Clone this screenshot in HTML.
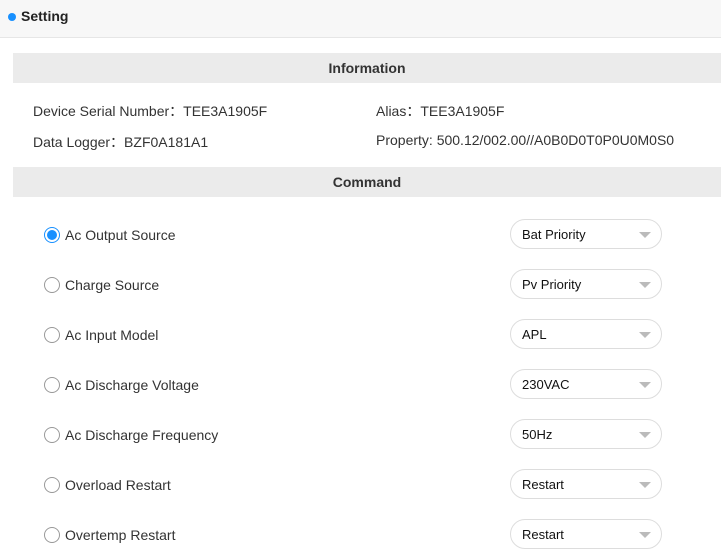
<!DOCTYPE html>
<html><head><style>
body{margin:0;width:721px;height:560px;overflow:hidden;background:#fff;font-family:"Liberation Sans",Arial,sans-serif;color:#333;font-size:14px;position:relative}
.hd{position:absolute;left:0;top:0;width:721px;height:37px;background:#f7f7f7;border-bottom:1px solid #e6e6e6}
.dot{position:absolute;left:8px;top:13px;width:8px;height:8px;border-radius:50%;background:#1890ff}
.hd b{position:absolute;left:21px;top:8px;font-size:14px;color:#222}
.bar{position:absolute;left:13px;width:708px;height:30px;background:#ebebeb;text-align:center;line-height:30px;font-weight:bold;color:#333;font-size:14px}
.t{position:absolute;white-space:nowrap}
.r{position:absolute;left:44px;width:14px;height:14px;border:1px solid #999;border-radius:50%;background:#fff}
.r.on{border-color:#1890ff}
.r.on:after{content:"";position:absolute;left:2px;top:2px;width:10px;height:10px;border-radius:50%;background:#1890ff}
.s{position:absolute;left:510px;width:150px;height:28px;border:1px solid #ddd;border-radius:15px;font-size:13px;color:#111;line-height:30px;box-sizing:content-box}
.s span{position:absolute;left:11px}
.s i{position:absolute;right:10px;top:12px;width:0;height:0;border-left:6px solid transparent;border-right:6px solid transparent;border-top:6px solid #bbb}
</style></head><body>
<div class="hd"><div class="dot"></div><b>Setting</b></div>
<div class="bar" style="top:53px">Information</div>
<div class="t" style="left:33px;top:101px">Device Serial Number：TEE3A1905F</div>
<div class="t" style="left:376px;top:101px">Alias：TEE3A1905F</div>
<div class="t" style="left:33px;top:132px">Data Logger：BZF0A181A1</div>
<div class="t" style="left:376px;top:132px">Property: 500.12/002.00//A0B0D0T0P0U0M0S0</div>
<div class="bar" style="top:167px">Command</div>

<div class="r on" style="top:227px"></div><div class="t" style="left:65px;top:227px">Ac Output Source</div>
<div class="s" style="top:219px"><span>Bat Priority</span><i></i></div>
<div class="r" style="top:277px"></div><div class="t" style="left:65px;top:277px">Charge Source</div>
<div class="s" style="top:269px"><span>Pv Priority</span><i></i></div>
<div class="r" style="top:327px"></div><div class="t" style="left:65px;top:327px">Ac Input Model</div>
<div class="s" style="top:319px"><span>APL</span><i></i></div>
<div class="r" style="top:377px"></div><div class="t" style="left:65px;top:377px">Ac Discharge Voltage</div>
<div class="s" style="top:369px"><span>230VAC</span><i></i></div>
<div class="r" style="top:427px"></div><div class="t" style="left:65px;top:427px">Ac Discharge Frequency</div>
<div class="s" style="top:419px"><span>50Hz</span><i></i></div>
<div class="r" style="top:477px"></div><div class="t" style="left:65px;top:477px">Overload Restart</div>
<div class="s" style="top:469px"><span>Restart</span><i></i></div>
<div class="r" style="top:527px"></div><div class="t" style="left:65px;top:527px">Overtemp Restart</div>
<div class="s" style="top:519px"><span>Restart</span><i></i></div>
</body></html>
